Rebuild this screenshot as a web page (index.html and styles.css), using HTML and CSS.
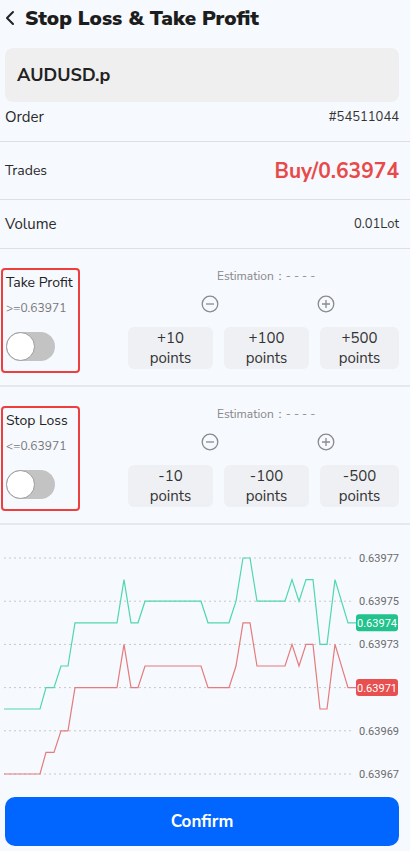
FILE: index.html
```html
<!DOCTYPE html>
<html lang="en">
<head>
    <meta charset="UTF-8">
    <meta name="viewport" content="width=device-width, initial-scale=1.0">
    <title>Stop Loss &amp; Take Profit</title>
    <link rel="stylesheet" href="styles.css">
</head>
<body>
    <header class="header">
        <svg class="back" width="10" height="16" viewBox="0 0 10 16">
            <path d="M8 2 L2 8 L8 14" fill="none" stroke="#222" stroke-width="2" stroke-linecap="round" stroke-linejoin="round"/>
        </svg>
        <h1>Stop Loss &amp; Take Profit</h1>
    </header>

    <div class="symbol">AUDUSD.p</div>

    <div class="info-row row-order">
        <span class="label">Order</span>
        <span class="value">#54511044</span>
    </div>
    <div class="info-row row-trades">
        <span class="label small">Trades</span>
        <span class="value buy">Buy/0.63974</span>
    </div>
    <div class="info-row row-volume">
        <span class="label">Volume</span>
        <span class="value">0.01Lot</span>
    </div>

    <section class="order-section">
        <div class="switch-box">
            <div class="switch-title">Take Profit</div>
            <div class="switch-sub">&gt;=0.63971</div>
            <div class="toggle"><span class="knob"></span></div>
        </div>
        <div class="adjust">
            <div class="estimation">Estimation：- - - -</div>
            <div class="steppers">
                <svg width="18" height="18" viewBox="0 0 18 18"><circle cx="9" cy="9" r="7.8" fill="none" stroke="#8a8a8a" stroke-width="1.3"/><path d="M5 9 H13" stroke="#8a8a8a" stroke-width="1.3"/></svg>
                <svg width="18" height="18" viewBox="0 0 18 18"><circle cx="9" cy="9" r="7.8" fill="none" stroke="#8a8a8a" stroke-width="1.3"/><path d="M5 9 H13 M9 5 V13" stroke="#8a8a8a" stroke-width="1.3"/></svg>
            </div>
            <div class="points">
                <button>+10<br>points</button>
                <button>+100<br>points</button>
                <button>+500<br>points</button>
            </div>
        </div>
    </section>

    <section class="order-section">
        <div class="switch-box">
            <div class="switch-title">Stop Loss</div>
            <div class="switch-sub">&lt;=0.63971</div>
            <div class="toggle"><span class="knob"></span></div>
        </div>
        <div class="adjust">
            <div class="estimation">Estimation：- - - -</div>
            <div class="steppers">
                <svg width="18" height="18" viewBox="0 0 18 18"><circle cx="9" cy="9" r="7.8" fill="none" stroke="#8a8a8a" stroke-width="1.3"/><path d="M5 9 H13" stroke="#8a8a8a" stroke-width="1.3"/></svg>
                <svg width="18" height="18" viewBox="0 0 18 18"><circle cx="9" cy="9" r="7.8" fill="none" stroke="#8a8a8a" stroke-width="1.3"/><path d="M5 9 H13 M9 5 V13" stroke="#8a8a8a" stroke-width="1.3"/></svg>
            </div>
            <div class="points">
                <button>-10<br>points</button>
                <button>-100<br>points</button>
                <button>-500<br>points</button>
            </div>
        </div>
    </section>

    <div class="chart">
        <svg width="410" height="262" viewBox="0 -2 410 262">
            <g stroke="#c8c8c8" stroke-width="1" stroke-dasharray="2 3">
                <line x1="4" y1="31" x2="354" y2="31"/>
                <line x1="4" y1="74.2" x2="354" y2="74.2"/>
                <line x1="4" y1="117.4" x2="354" y2="117.4"/>
                <line x1="4" y1="160.6" x2="354" y2="160.6"/>
                <line x1="4" y1="203.8" x2="354" y2="203.8"/>
                <line x1="4" y1="247" x2="354" y2="247"/>
            </g>
            <g class="axis">
                <text x="359" y="35">0.63977</text>
                <text x="359" y="78">0.63975</text>
                <text x="359" y="121">0.63973</text>
                <text x="359" y="208">0.63969</text>
                <text x="359" y="251">0.63967</text>
            </g>
            <polyline fill="none" stroke="#4fd8ab" stroke-width="1.2" points="4,182 40,182 46,160.6 54,160.6 61,139 68,139 75,95.8 117,95.8 124,52.6 131,95.8 138,95.8 145,74.2 201,74.2 208,95.8 229,95.8 236,74.2 243,31 250,31 257,74.2 285,74.2 292,52.6 299,74.2 306,52.6 313,52.6 320,117.4 327,117.4 335,52.6 348,95.8 356,95.8"/>
            <polyline fill="none" stroke="#e57b7b" stroke-width="1.2" points="4,247 40,247 46,225.4 54,225.4 61,203.8 68,203.8 75,160.6 117,160.6 124,117.4 131,160.6 138,160.6 145,139 201,139 208,160.6 229,160.6 236,139 243,95.8 250,95.8 257,139 285,139 292,117.4 299,139 306,117.4 313,117.4 320,182 327,182 335,117.4 348,160.6 356,160.6"/>
            <rect x="356" y="87.3" width="42" height="17" rx="3" fill="#22c28d"/>
            <text class="tag" x="377" y="100">0.63974</text>
            <rect x="356" y="152.1" width="42" height="17" rx="3" fill="#e84f4f"/>
            <text class="tag" x="377" y="164.8">0.63971</text>
        </svg>
    </div>

    <button class="confirm">Confirm</button>
</body>
</html>
```

FILE: styles.css
```css
body {
    margin: 0;
    width: 410px;
    background-color: #f6f9fe;
    font-family: "Nunito Sans", Lato, "Noto Sans", sans-serif;
    color: #222;
}

.header {
    display: flex;
    align-items: center;
    height: 36px;
    padding-left: 5px;
}

.header .back {
    margin-right: 10px;
}

.header h1 {
    margin: 0;
    font-size: 20.5px;
    font-weight: 900;
    color: #1d1d1d;
}

.symbol {
    margin: 12px 11px 0 5px;
    height: 54px;
    line-height: 54px;
    padding-left: 12px;
    background-color: #efefef;
    border-radius: 8px;
    font-size: 18px;
    font-weight: bold;
}

.info-row {
    display: flex;
    justify-content: space-between;
    align-items: center;
    padding: 0 11px 0 5px;
    border-bottom: 1px solid #dedfe2;
}

.row-order { height: 40px; padding-bottom: 9px; box-sizing: border-box; }
.row-trades { height: 57px; }
.row-volume { height: 48px; }

.label {
    font-size: 15px;
    color: #2a2a2a;
}

.label.small {
    font-size: 14px;
}

.value {
    font-size: 13px;
    color: #333;
}

.value.buy {
    font-size: 21px;
    font-weight: bold;
    color: #e84a4a;
}

.order-section {
    display: flex;
    height: 138px;
    padding: 19px 11px 0 1px;
    box-sizing: border-box;
    border-bottom: 2px solid #e5e8ed;
}

.switch-box {
    width: 79px;
    height: 105px;
    box-sizing: border-box;
    border: 2px solid #ee3f3f;
    border-radius: 4px;
    padding: 4px 0 0 3px;
}

.switch-title {
    font-size: 14px;
    line-height: 18px;
    color: #222;
}

.switch-sub {
    margin-top: 8px;
    font-size: 12px;
    line-height: 16px;
    color: #777;
}

.toggle {
    position: relative;
    margin-top: 16px;
    width: 49px;
    height: 29px;
    border-radius: 15px;
    background-color: #c3c3c3;
}

.toggle .knob {
    position: absolute;
    left: 0;
    top: 0;
    width: 27px;
    height: 27px;
    border-radius: 50%;
    background-color: #fff;
    border: 1px solid #9a9a9a;
}

.adjust {
    margin-left: 48px;
    width: 271px;
}

.estimation {
    font-size: 12px;
    line-height: 16px;
    color: #888;
    padding-left: 89px;
}

.steppers {
    display: flex;
    gap: 98px;
    height: 20px;
    align-items: center;
    margin-top: 10px;
    padding-left: 73px;
}

.points {
    display: grid;
    grid-template-columns: 85px 85px 79px;
    gap: 11px;
    margin-top: 13px;
}

.points button {
    height: 42px;
    border: none;
    border-radius: 6px;
    background-color: #eef0f3;
    font-family: inherit;
    font-size: 15px;
    line-height: 20px;
    color: #333;
    padding: 0;
}

.chart {
    height: 262px;
}

.chart svg {
    display: block;
}

.axis text {
    font-family: Roboto, sans-serif;
    font-size: 11px;
    fill: #6b6b6b;
}

.tag {
    font-family: Roboto, sans-serif;
    font-size: 11px;
    fill: #fff;
    text-anchor: middle;
}

.confirm {
    display: block;
    margin: 10px 11px 0 5px;
    width: 394px;
    height: 49px;
    border: none;
    border-radius: 10px;
    background-color: #0066ff;
    color: #fff;
    font-family: inherit;
    font-size: 17px;
    font-weight: bold;
}
```
